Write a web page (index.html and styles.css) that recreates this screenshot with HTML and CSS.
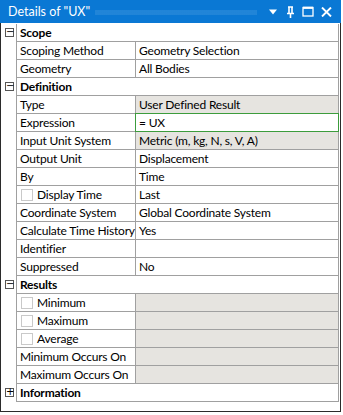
FILE: index.html
```html
<!DOCTYPE html>
<html>
<head>
  <meta charset="UTF-8">
  <title>Details of "UX"</title>
  <link rel="stylesheet" href="styles.css">
</head>
<body>
<div class="panel">
  <div class="titlebar">
    <span class="title">Details of "UX"</span>
    <span class="grip"></span>
    <svg class="tb-icon" width="10" height="6" viewBox="0 0 10 6"><path d="M1 0.5 H9 L5 5.5 Z" fill="#fff"/></svg>
    <svg class="tb-icon pin" width="9" height="12" viewBox="0 0 9 12"><path d="M2 1 H7 M3 1 V7 M6 1 V7 M1 7.5 H8 M4.5 8 V12" stroke="#fff" stroke-width="1.6" fill="none"/></svg>
    <svg class="tb-icon" width="12" height="11" viewBox="0 0 12 11"><rect x="1" y="1.5" width="10" height="8.5" stroke="#fff" stroke-width="1.3" fill="none"/><path d="M1 1.8 H11" stroke="#fff" stroke-width="2.2"/></svg>
    <svg class="tb-icon" width="11" height="10" viewBox="0 0 11 10"><path d="M1 0.5 L10 9.5 M10 0.5 L1 9.5" stroke="#fff" stroke-width="1.9"/></svg>
  </div>
  <div class="sheet">
    <div class="row group"><span class="exp">&minus;</span><div class="cell head">Scope</div></div>
    <div class="row"><span class="exp-blank"></span><div class="cell label">Scoping Method</div><div class="cell value">Geometry Selection</div></div>
    <div class="row"><span class="exp-blank"></span><div class="cell label">Geometry</div><div class="cell value">All Bodies</div></div>

    <div class="row group"><span class="exp">&minus;</span><div class="cell head">Definition</div></div>
    <div class="row"><span class="exp-blank"></span><div class="cell label">Type</div><div class="cell value ro">User Defined Result</div></div>
    <div class="row"><span class="exp-blank"></span><div class="cell label">Expression</div><div class="cell value edit">= UX</div></div>
    <div class="row"><span class="exp-blank"></span><div class="cell label">Input Unit System</div><div class="cell value ro">Metric (m, kg, N, s, V, A)</div></div>
    <div class="row"><span class="exp-blank"></span><div class="cell label">Output Unit</div><div class="cell value">Displacement</div></div>
    <div class="row"><span class="exp-blank"></span><div class="cell label">By</div><div class="cell value">Time</div></div>
    <div class="row"><span class="exp-blank"></span><div class="cell label"><span class="check"></span>Display Time</div><div class="cell value">Last</div></div>
    <div class="row"><span class="exp-blank"></span><div class="cell label">Coordinate System</div><div class="cell value">Global Coordinate System</div></div>
    <div class="row"><span class="exp-blank"></span><div class="cell label">Calculate Time History</div><div class="cell value">Yes</div></div>
    <div class="row"><span class="exp-blank"></span><div class="cell label">Identifier</div><div class="cell value"></div></div>
    <div class="row"><span class="exp-blank"></span><div class="cell label">Suppressed</div><div class="cell value">No</div></div>

    <div class="row group"><span class="exp">&minus;</span><div class="cell head">Results</div></div>
    <div class="row"><span class="exp-blank"></span><div class="cell label"><span class="check"></span>Minimum</div><div class="cell value ro"></div></div>
    <div class="row"><span class="exp-blank"></span><div class="cell label"><span class="check"></span>Maximum</div><div class="cell value ro"></div></div>
    <div class="row"><span class="exp-blank"></span><div class="cell label"><span class="check"></span>Average</div><div class="cell value ro"></div></div>
    <div class="row"><span class="exp-blank"></span><div class="cell label">Minimum Occurs On</div><div class="cell value ro"></div></div>
    <div class="row"><span class="exp-blank"></span><div class="cell label">Maximum Occurs On</div><div class="cell value ro"></div></div>

    <div class="row group"><span class="exp">+</span><div class="cell head">Information</div></div>
  </div>
</div>
</body>
</html>
```

FILE: styles.css
```css
body {
  margin: 0;
  background: #fff;
  font-family: Lato, "Noto Sans", sans-serif;
  font-size: 12px;
  letter-spacing: -0.2px;
  color: #000;
}

.panel {
  width: 339px;
  height: 411px;
  border: 1px solid #2b2b2b;
  border-top: none;
  background: #fff;
}

.titlebar {
  height: 23px;
  margin-left: -1px;
  margin-right: -1px;
  background: #0a78d4;
  display: flex;
  align-items: center;
  padding: 0 9px 0 8px;
  color: #fff;
}

.title {
  white-space: nowrap;
  font-size: 12.5px;
  letter-spacing: 0;
}

.grip {
  flex: 1;
  height: 5px;
  margin: 1px 4px 0 5px;
  background-image: radial-gradient(circle, rgba(255, 255, 255, .3) 0.5px, transparent 0.8px);
  background-size: 2px 2px;
}

.tb-icon {
  display: block;
  margin-left: 7px;
}

.pin {
  margin-left: 8px;
}

.sheet {
  padding-top: 1px;
  margin-right: 1px;
}

.row {
  display: flex;
  height: 18px;
}

.exp,
.exp-blank {
  width: 15px;
  flex: none;
}

.exp {
  box-sizing: border-box;
  width: 9px;
  height: 9px;
  margin: 4px 2px 0 4px;
  border: 1px solid #555;
  font-size: 10px;
  line-height: 6px;
  text-align: center;
  font-family: "DejaVu Sans", sans-serif;
  letter-spacing: 0;
  color: #000;
}

.cell {
  box-sizing: border-box;
  height: 18px;
  border-bottom: 1px solid #a0a0a0;
  padding: 0 0 0 3px;
  line-height: 17px;
  white-space: nowrap;
  overflow: hidden;
  display: flex;
  align-items: center;
}

.head {
  flex: 1;
  border-left: 1px solid #a0a0a0;
  border-right: 1px solid #a0a0a0;
  font-weight: bold;
}

.label {
  width: 120px;
  border-left: 1px solid #a0a0a0;
  border-right: 1px solid #a0a0a0;
}

.value {
  flex: 1;
  border-right: 1px solid #a0a0a0;
}

.ro {
  background: #e6e4e0;
}

.edit {
  height: 19px;
  margin: -1px 0 0 -1px;
  padding-left: 3px;
  border: 1px solid #3c9c3c;
}

.check {
  box-sizing: border-box;
  width: 12px;
  height: 12px;
  border: 1px solid #c9c9c9;
  background: #fff;
  margin: 0 4px 0 1px;
  flex: none;
}
```
